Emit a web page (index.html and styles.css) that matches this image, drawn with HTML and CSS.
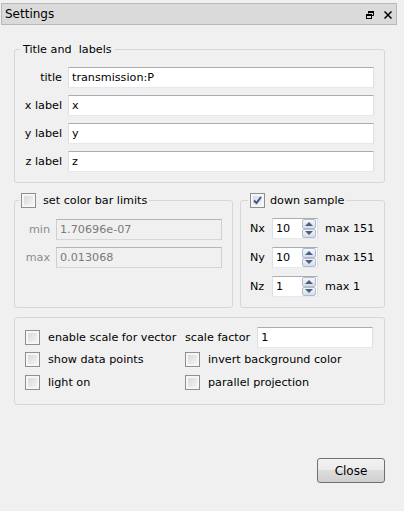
FILE: index.html
```html
<!DOCTYPE html>
<html lang="en">
<head>
    <meta charset="UTF-8">
    <meta name="viewport" content="width=device-width, initial-scale=1.0">
    <title>Settings</title>
    <link rel="stylesheet" href="styles.css">
</head>
<body>

    <div class="titlebar">
        <span class="title">Settings</span>
        <span class="bar-buttons">
            <svg class="bar-icon" width="8" height="8" viewBox="0 0 8 8">
                <path d="M2.5 2.5V0.5H7.5V4.5H6" fill="none" stroke="#000" stroke-width="1"/>
                <rect x="2" y="0" width="6" height="2" fill="#000"/>
                <rect x="0.5" y="3.5" width="5" height="4" fill="none" stroke="#000" stroke-width="1"/>
                <rect x="0" y="3" width="6" height="2" fill="#000"/>
            </svg>
            <svg class="bar-icon" width="8" height="8" viewBox="0 0 8 8">
                <path d="M0.5 0.5L7.5 7.5M7.5 0.5L0.5 7.5" stroke="#000" stroke-width="1.5"/>
            </svg>
        </span>
    </div>

    <div class="content">
        <fieldset class="group labels">
            <legend>Title and&nbsp; labels</legend>
            <div class="form-grid">
                <label>title</label><input type="text" value="transmission:P">
                <label>x label</label><input type="text" value="x">
                <label>y label</label><input type="text" value="y">
                <label>z label</label><input type="text" value="z">
            </div>
        </fieldset>

        <div class="group-row">
            <fieldset class="group limits">
                <legend><span class="check"></span>set color bar limits</legend>
                <div class="form-grid limits-grid">
                    <label class="disabled">min</label><input type="text" value="1.70696e-07" disabled>
                    <label class="disabled">max</label><input type="text" value="0.013068" disabled>
                </div>
            </fieldset>

            <fieldset class="group sample">
                <legend><span class="check checked"><svg width="11" height="11" viewBox="0 0 11 11"><path d="M2 5.5L4.5 8L9 2" fill="none" stroke="#3f558e" stroke-width="2"/></svg></span>down sample</legend>
                <div class="spin-grid">
                    <label>Nx</label>
                    <div class="spin"><span class="spin-value">10</span><span class="arrows"><span class="arrow up"></span><span class="arrow down"></span></span></div>
                    <span>max 151</span>
                    <label>Ny</label>
                    <div class="spin"><span class="spin-value">10</span><span class="arrows"><span class="arrow up"></span><span class="arrow down"></span></span></div>
                    <span>max 151</span>
                    <label>Nz</label>
                    <div class="spin"><span class="spin-value">1</span><span class="arrows"><span class="arrow up"></span><span class="arrow down"></span></span></div>
                    <span>max 1</span>
                </div>
            </fieldset>
        </div>

        <fieldset class="group options">
            <div class="options-grid">
                <div class="check-item"><span class="check"></span>enable scale for vector</div>
                <div class="scale-item">scale factor<input type="text" value="1"></div>
                <div class="check-item"><span class="check"></span>show data points</div>
                <div class="check-item"><span class="check"></span>invert background color</div>
                <div class="check-item"><span class="check"></span>light on</div>
                <div class="check-item"><span class="check"></span>parallel projection</div>
            </div>
        </fieldset>

        <div class="buttons">
            <button type="button">Close</button>
        </div>
    </div>

</body>
</html>
```

FILE: styles.css
```css
body {
    margin: 0;
    width: 404px;
    height: 511px;
    overflow: hidden;
    background-color: #f0f0f0;
    font-family: "DejaVu Sans", sans-serif;
    font-size: 11.2px;
    color: #000;
}
.titlebar {
    margin: 3px 7px 0 1px;
    height: 20px;
    border: 1px solid #b9b9b9;
    background-color: #dadada;
    display: flex;
    align-items: center;
    justify-content: space-between;
    padding: 0 4px 0 3px;
}
.title {
    font-size: 12px;
}
.bar-buttons {
    display: flex;
    gap: 10px;
    padding-top: 1px;
}
.bar-icon {
    display: block;
}
.content {
    padding: 0 19px 0 14px;
}
.group {
    margin: 0;
    padding: 0;
    border: 1px solid #d6d6d6;
    border-radius: 3px;
    min-width: 0;
}
.group legend {
    line-height: 15px;
    padding: 0 3px;
    margin-left: 5px;
    display: flex;
    align-items: center;
}
.labels {
    margin-top: 17px;
    padding: 10px 10px 10px 0;
}
.form-grid {
    display: grid;
    grid-template-columns: 47px 1fr;
    column-gap: 6px;
    row-gap: 7px;
    align-items: center;
}
.form-grid label {
    text-align: right;
}
input[type="text"] {
    height: 21px;
    box-sizing: border-box;
    border: 1px solid;
    border-color: #abadb3 #dcdfe6 #e3e9ef #dcdfe6;
    background-color: #fff;
    padding: 0 3px;
    font-family: inherit;
    font-size: inherit;
    color: #000;
    margin: 0;
    min-width: 0;
    outline: none;
}
input[type="text"]:disabled {
    background-color: #f0f0f0;
    border-color: #b5b5b5 #cfcfcf #d6d6d6 #cfcfcf;
    color: #7a7a7a;
}
label.disabled {
    color: #8c8c8c;
}
.group-row {
    display: flex;
    gap: 7px;
    margin-top: 10px;
}
.limits {
    width: 219px;
    box-sizing: border-box;
    padding: 11px 10px 10px 0;
}
.limits legend {
    margin-left: 4px;
    padding: 0 2px;
}
.limits-grid {
    grid-template-columns: 35px 1fr;
    column-gap: 6px;
}
.sample {
    flex: 1;
    padding: 10px 8px 10px 9px;
}
.sample legend {
    margin-left: -2px;
    padding: 0 2px;
}
.check {
    width: 13px;
    height: 13px;
    border: 1px solid #8e8f8f;
    background: linear-gradient(135deg, #d3d5d8, #f8f8f8);
    box-shadow: inset 0 0 0 2px #f6f6f6;
    display: inline-flex;
    align-items: center;
    justify-content: center;
    flex: none;
    margin-right: 7px;
}
.sample .check {
    margin-right: 5px;
}
.check svg {
    display: block;
}
.spin-grid {
    display: grid;
    grid-template-columns: 22px 46px auto;
    column-gap: 0;
    row-gap: 8px;
    align-items: center;
}
.spin-grid > span {
    margin-left: 7px;
}
.spin {
    height: 21px;
    box-sizing: border-box;
    border: 1px solid;
    border-color: #abadb3 #dcdfe6 #e3e9ef #dcdfe6;
    background-color: #fff;
    display: flex;
    align-items: center;
    justify-content: space-between;
}
.spin-value {
    padding-left: 3px;
}
.arrows {
    display: flex;
    flex-direction: column;
    width: 14px;
    height: 19px;
    margin-right: 1px;
}
.arrow {
    flex: 1;
    border: 1px solid #b3bdc9;
    border-radius: 2px;
    background: linear-gradient(#f4f7fb, #d5dde7);
    display: flex;
    align-items: center;
    justify-content: center;
}
.arrow::before {
    content: "";
    border-left: 4px solid transparent;
    border-right: 4px solid transparent;
}
.arrow.up::before {
    border-bottom: 4px solid #4b5f86;
}
.arrow.down::before {
    border-top: 4px solid #4b5f86;
}
.options {
    margin-top: 9px;
    padding: 9px 11px 10px 10px;
}
.options-grid {
    display: grid;
    grid-template-columns: 160px minmax(0, 1fr);
    grid-template-rows: 21px 23px 23px;
    align-items: center;
}
.check-item {
    display: flex;
    align-items: center;
    white-space: nowrap;
}
.check-item .check {
    margin-right: 8px;
}
.scale-item {
    display: flex;
    align-items: center;
    min-width: 0;
}
.scale-item input[type="text"] {
    flex: 1;
    width: 0;
    margin-left: 7px;
}
.buttons {
    display: flex;
    justify-content: flex-end;
    margin-top: 53px;
}
button {
    width: 68px;
    height: 25px;
    border: 1px solid #707070;
    border-radius: 3px;
    background: linear-gradient(#f2f2f2 0%, #ebebeb 50%, #dddddd 50%, #cfcfcf 100%);
    font-family: inherit;
    font-size: 12px;
    color: #000;
    padding: 0;
    cursor: pointer;
}
```
